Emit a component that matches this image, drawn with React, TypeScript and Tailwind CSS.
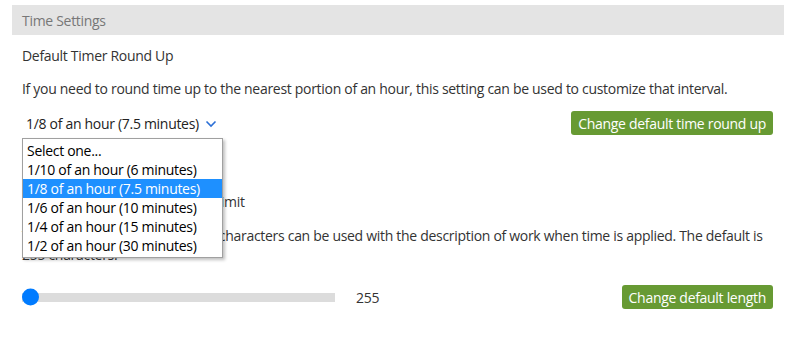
import { useState } from 'react';

const roundOptions = [
  'Select one...',
  '1/10 of an hour (6 minutes)',
  '1/8 of an hour (7.5 minutes)',
  '1/6 of an hour (10 minutes)',
  '1/4 of an hour (15 minutes)',
  '1/2 of an hour (30 minutes)',
];

function ChevronDown() {
  return (
    <svg width="12" height="8" viewBox="0 0 12 8" className="ml-[6px] mt-[1px]">
      <path d="M1.5 1.5 L6 6 L10.5 1.5" fill="none" stroke="#2b6fd6" strokeWidth="1.6" />
    </svg>
  );
}

export default function App() {
  const [selected] = useState(2);
  const [length] = useState(255);

  return (
    <div className="w-[791px] h-[350px] bg-white pl-3 pr-[7px] pt-[5px] font-['Open_Sans',sans-serif] text-[14px] tracking-[-0.3px] text-[#333]">
      <div className="flex h-[30px] items-center bg-[#e4e4e4] px-[10px] text-[#777]">Time Settings</div>

      <div className="px-[10px]">
        <p className="mt-[11px] leading-[20px]">Default Timer Round Up</p>
        <p className="mt-[13px] leading-[20px]">
          If you need to round time up to the nearest portion of an hour, this setting can be used to customize that interval.
        </p>

        <div className="relative mt-[12px] flex items-center justify-between pr-[1px]">
          <div className="flex items-center pl-[4px] text-[#222]">
            {roundOptions[selected]}
            <ChevronDown />
          </div>
          <button className="h-[24px] rounded-[3px] bg-[#679a33] px-[7px] text-[14px] text-white">
            Change default time round up
          </button>

          <ul className="absolute left-0 top-[27px] z-10 w-[201px] border border-[#a0a0a0] bg-white py-[2px] text-black shadow-[2px_2px_3px_rgba(0,0,0,0.25)]">
            {roundOptions.map((opt, i) => (
              <li
                key={opt}
                className={
                  i === selected
                    ? 'bg-[#1e90ff] px-[4px] leading-[19px] text-white'
                    : 'px-[4px] leading-[19px]'
                }
              >
                {opt}
              </li>
            ))}
          </ul>
        </div>

        <p className="mt-[57px] leading-[20px]">Description of Work Character Limit</p>
        <p className="mt-[14px] leading-[19px]">
          This setting controls how many characters can be used with the description of work when time is applied. The default is 255 characters.
        </p>

        <div className="mt-[21px] flex items-center justify-between pr-[1px]">
          <div className="flex items-center">
            <div className="relative h-[9px] w-[313px] bg-[#dcdcdc]">
              <div className="absolute left-0 top-1/2 h-[17px] w-[17px] -translate-y-1/2 rounded-full bg-[#007bff]" />
            </div>
            <span className="ml-[21px]">{length}</span>
          </div>
          <button className="h-[24px] rounded-[3px] bg-[#679a33] px-[7px] text-[14px] text-white">
            Change default length
          </button>
        </div>
      </div>
    </div>
  );
}
